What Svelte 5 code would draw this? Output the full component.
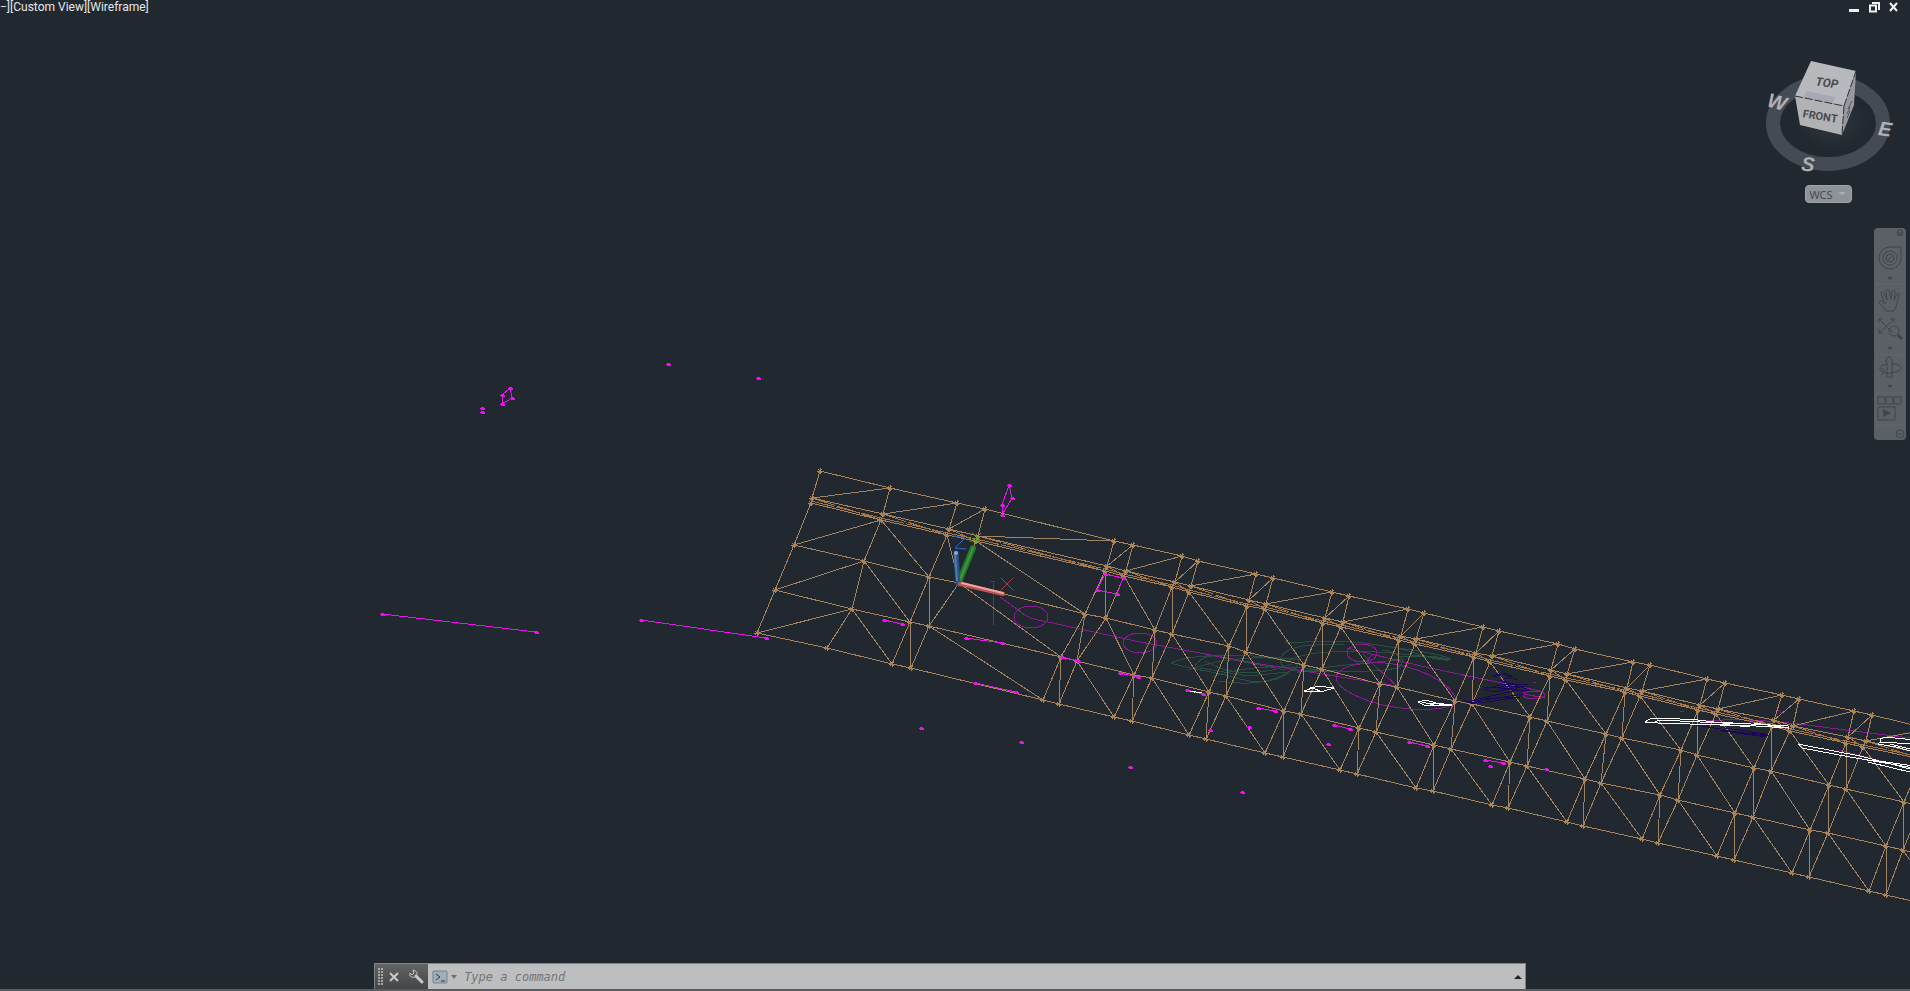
<script>
  // Each station across the strip: top, ridge, eave, third, two-thirds, bottom
  const stations = [
    [[820, 471], [812, 498], [811, 503], [794, 545], [775, 590], [757, 633]],
    [[890, 488], [883, 514], [881, 520], [864, 561], [852, 609], [827, 648]],
    [[957, 503], [949, 529], [947, 535], [929, 577], [910, 622], [892, 664]],
    [[985, 509], [978, 536], [976, 541], [959, 583], [929, 626], [911, 668]],
    [[1114, 541], [1107, 566], [1105, 571], [1085, 614], [1061, 657], [1043, 700]],
    [[1133, 545], [1126, 571], [1124, 576], [1106, 618], [1077, 661], [1059, 704]],
    [[1182, 556], [1175, 582], [1172, 587], [1155, 630], [1134, 675], [1114, 717]],
    [[1198, 561], [1191, 586], [1189, 592], [1172, 634], [1152, 678], [1132, 721]],
    [[1256, 574], [1249, 600], [1247, 606], [1229, 646], [1209, 692], [1189, 735]],
    [[1273, 578], [1266, 604], [1265, 609], [1246, 652], [1226, 696], [1206, 739]],
    [[1332, 592], [1325, 618], [1323, 623], [1304, 665], [1284, 711], [1265, 753]],
    [[1349, 596], [1343, 622], [1341, 627], [1322, 669], [1301, 714], [1283, 757]],
    [[1408, 609], [1401, 636], [1399, 640], [1380, 684], [1359, 728], [1340, 770]],
    [[1424, 613], [1416, 639], [1415, 644], [1397, 687], [1376, 732], [1357, 774]],
    [[1483, 627], [1476, 653], [1474, 657], [1455, 701], [1434, 745], [1416, 788]],
    [[1499, 631], [1492, 656], [1490, 662], [1472, 704], [1451, 749], [1433, 791]],
    [[1558, 644], [1551, 670], [1550, 676], [1530, 717], [1510, 762], [1492, 805]],
    [[1575, 649], [1567, 674], [1566, 680], [1547, 721], [1527, 766], [1508, 808]],
    [[1633, 662], [1627, 688], [1625, 692], [1606, 734], [1585, 779], [1567, 822]],
    [[1650, 665], [1642, 691], [1640, 696], [1622, 738], [1601, 783], [1583, 826]],
    [[1707, 679], [1700, 705], [1698, 710], [1681, 750], [1660, 795], [1642, 839]],
    [[1725, 683], [1718, 709], [1716, 714], [1697, 755], [1678, 800], [1658, 843]],
    [[1782, 695], [1774, 720], [1772, 726], [1754, 768], [1735, 813], [1717, 856]],
    [[1799, 699], [1793, 726], [1790, 731], [1771, 771], [1753, 817], [1734, 860]],
    [[1854, 711], [1848, 737], [1846, 743], [1829, 785], [1810, 830], [1792, 873]],
    [[1872, 715], [1866, 741], [1863, 747], [1846, 789], [1828, 833], [1809, 877]],
    [[1930, 729], [1924, 754], [1922, 759], [1904, 802], [1886, 846], [1869, 891]],
    [[1947, 733], [1940, 758], [1938, 764], [1921, 806], [1903, 850], [1886, 895]],
    [[2005, 746], [1998, 772], [1996, 777], [1978, 818], [1960, 864], [1943, 908]]
  ];

  const seg = (a, b) => `M${a[0]} ${a[1]}L${b[0]} ${b[1]}`;
  const run = (pts) => 'M' + pts.map((p) => p.join(' ')).join('L');
  const rows = [0, 1, 2, 3, 4, 5].map((r) => run(stations.map((s) => s[r]))).join('');
  const ribs = stations.map(run).join('');

  let braces = '';
  for (let i = 0; i < stations.length - 1; i++) {
    const a = stations[i];
    const b = stations[i + 1];
    braces += seg(a[1], b[0]);
    if (i === 0) {
      braces += seg(b[2], a[3]) + seg(b[3], a[4]) + seg(b[4], a[5]);
    } else {
      braces += seg(a[2], b[3]) + seg(a[3], b[4]) + seg(a[4], b[5]);
    }
  }

  let band = '';
  for (let i = 0; i < stations.length - 1; i++) {
    const a = stations[i];
    const b = stations[i + 1];
    band += seg(a[1], b[2]) + seg([a[2][0], a[2][1] - 2], [b[2][0], b[2][1] - 2]);
  }

  const star = ([x, y]) => `M${x - 3} ${y}h6M${x} ${y - 3}v6M${x - 2} ${y - 2}l4 4M${x + 2} ${y - 2}l-4 4`;
  const nodes = stations.flat().map(star).join('');

  const markers = [
    [482, 408], [482, 412], [668, 364], [758, 378], [921, 728], [1021, 742], [1130, 767],
    [1242, 792], [1210, 730], [1249, 727], [1328, 744], [1490, 766], [1546, 769]
  ];
  const spans = [
    [[382, 614], [536, 632]], [[641, 620], [766, 638]], [[884, 620], [902, 624]],
    [[966, 638], [1002, 643]], [[975, 683], [1016, 692]], [[1062, 657], [1078, 661]],
    [[1120, 673], [1138, 677]], [[1187, 690], [1203, 694]], [[1258, 708], [1275, 711]],
    [[1334, 725], [1350, 729]], [[1409, 742], [1427, 746]], [[1485, 760], [1503, 763]]
  ];
  const quads = [
    [[510, 388], [512, 398], [502, 404], [502, 395]],
    [[1009, 485], [1012, 498], [1002, 515], [1002, 505]],
    [[1105, 574], [1123, 578], [1117, 594], [1097, 590]]
  ];
  const loops = quads.map((q) => run(q) + 'Z').join('');
  const dots = [...markers, ...spans.flat(), ...quads.flat()];

  let command = $state('');
</script>

<main class="viewport">
  <svg class="model" viewBox="0 0 1910 991" preserveAspectRatio="xMinYMin slice" aria-label="Model space">
    <g class="aliased">
      <g class="green">
        <path d="M1171 663C1188 655 1230 652 1300 660M1171 663C1188 669 1218 672 1240 679C1264 686 1288 678 1294 666M1195 666C1200 658 1210 653 1224 658L1285 670M1188 670C1230 655 1280 655 1296 664M1212 677C1245 665 1290 664 1330 672M1218 681C1250 686 1274 682 1290 671M1205 661C1230 676 1260 676 1292 664M1200 668L1248 676L1288 672" />
        <path d="M1284 643C1320 641 1352 640 1384 646C1410 650 1440 653 1451 659M1281 657C1288 645 1310 644 1345 645M1285 662C1310 648 1370 648 1451 660M1290 670C1330 670 1370 674 1397 668C1410 660 1397 652 1382 650M1400 649C1420 653 1432 661 1448 660M1398 656L1430 656L1450 659M1297 673C1330 664 1370 664 1404 659M1281 657C1278 668 1290 674 1330 671M1294 650C1300 656 1300 663 1294 670" />
      </g>
      <g class="purple">
        <path d="M993 583V625M991 581h4M1000 597L1021 612Q1028 619 1048 622L1140 642L1260 664L1397 686" />
        <ellipse cx="1031" cy="617" rx="17" ry="11" />
        <ellipse cx="1140" cy="643" rx="17" ry="10" />
        <ellipse cx="1362" cy="653" rx="15" ry="9" />
        <path d="M1336 677C1338 666 1360 662 1385 663C1420 666 1452 684 1456 700C1454 709 1430 710 1410 709C1370 706 1336 690 1336 677Z" />
        <path d="M1347 648C1375 655 1395 660 1430 668L1540 691M1363 654L1375 666L1397 686M1372 655L1366 662" />
        <ellipse cx="1534" cy="695" rx="11" ry="4" />
        <path d="M1524 694L1545 698M1533 682h3M1680 711h4M1777 709l4 4M1812 733l6 3M1700 721C1740 718 1790 722 1830 728L1910 738M1838 750L1910 768" />
      </g>
      <path class="brace" d={braces} />
      <path class="band" d={band} />
      <path class="tan" d={rows + ribs} />
      <path class="tan" d={nodes} />
      <path class="navy" d="M1463 702L1490 699L1524 694M1464 700L1472 704L1485 699L1514 697M1466 703L1486 702L1520 697M1482 690L1500 685L1528 684M1484 688L1502 687L1526 686M1482 689L1494 692L1520 687M1494 677L1506 673L1510 678L1518 680M1492 676L1500 674L1512 676L1504 679M1500 680L1530 690L1512 691M1474 700L1500 694L1518 690L1500 688M1502 682L1514 684M1720 730L1768 736M1722 731L1767 735M1725 728L1766 734M1730 732L1766 737M1690 724L1720 729" />
      <path class="white" d="M1304 691L1318 686L1334 688L1324 691ZM1310 687L1320 691M1418 702L1426 700L1436 703L1452 705L1436 706L1424 705ZM1422 702L1434 705M1430 703L1448 705M1190 691L1203 694" />
      <path class="white" d="M1645 722L1650 719L1662 718L1698 720L1714 722L1788 726L1788 728L1740 725L1750 726L1690 724L1658 723ZM1652 723L1660 720L1700 722L1746 724M1720 724L1750 727M1754 723L1788 728" />
      <path class="white" d="M1798 744L1808 746L1860 756L1914 770M1798 744L1802 748L1850 757L1914 768M1868 762L1914 773M1872 760L1914 766M1880 739L1886 737L1914 740M1880 742L1878 744L1896 747L1914 752M1880 739L1880 742L1914 744M1890 744L1914 750" />
      <path class="magenta" d={spans.map(([a, b]) => seg(a, b)).join('') + loops} />
      <path class="magenta" d={dots.map(([x, y]) => `M${x - 2} ${y}h5M${x - 1} ${y - 1}h3M${x - 1} ${y + 1}h4`).join('')} />
      <path class="white" d="M1190 691L1202 693" />
    </g>
    <g class="ucs">
      <path d="M959 582L973 548" stroke="#26782c" stroke-width="6" />
      <path d="M960 580L973 548" stroke="#3b9a38" stroke-width="2" />
      <path d="M958 584L956 553" stroke="#2d5185" stroke-width="5" />
      <path d="M957 580L955 553" stroke="#4d7cae" stroke-width="2" />
      <circle cx="956" cy="553" r="2" fill="#6fb0e8" />
      <path d="M960 584L1003 594" stroke="#b95759" stroke-width="4" />
      <path d="M962 583L1003 593" stroke="#f4a39d" stroke-width="2" />
      <path d="M1001 578L1013 590M1013 578L1001 590" stroke="#b8363a" />
      <path d="M953 536L965 538L955 548L966 549" stroke="#2e68ca" />
      <path d="M972 533L977 537L981 533M977 537L976 543M970 541L980 540" stroke="#58a729" />
    </g>
  </svg>

  <header class="titlebar">
    <div class="view-label">−][Custom View][Wireframe]</div>
    <div class="window-buttons">
      <button aria-label="Minimize"><svg viewBox="0 0 12 12"><path d="M1 9.500h10" stroke-width="3" /></svg></button>
      <button aria-label="Restore"><svg viewBox="0 0 12 12"><path d="M2 4.500h6v6h-6zM4 2h7v7" stroke-width="2" /></svg></button>
      <button aria-label="Close"><svg viewBox="0 0 12 12"><path d="M2 2L9 10M9 2L2 10" stroke-width="2" /></svg></button>
    </div>
  </header>

  <div class="compass">
    <svg viewBox="0 0 140 130" width="140" height="130" aria-label="View cube">
      <defs>
        <radialGradient id="shade"><stop offset="0.3" stop-color="#2c333b" /><stop offset="1" stop-color="#22282f" /></radialGradient>
      </defs>
      <ellipse cx="68" cy="63" rx="55" ry="41" fill="none" stroke="#454b53" stroke-width="14" />
      <ellipse cx="72" cy="62" rx="36" ry="28" fill="url(#shade)" />
      <path d="M51 1L96 11L84 46L35 36Z" fill="#b7b9bc" />
      <path d="M35 36L84 46L82 75L40 65Z" fill="#b0b2b4" />
      <path d="M96 11L84 46L82 75L94 45Z" fill="#96999d" />
      <path d="M46 31L75 37L73 44L44 38Z" fill="#a6a9b1" />
      <path d="M35 36L84 46L96 11M84 46L82 75" fill="none" stroke="#30353a" stroke-dasharray="8 2" />
      <path d="M87 54l3 -7M87 58l3 -7M88 49l4 -8" stroke="#53575c" fill="none" />
      <text class="face" x="67" y="27" transform="rotate(7 67 22)" font-size="12" font-style="italic">TOP</text>
      <text class="face" x="60" y="60" transform="rotate(9 60 57)" font-size="11">FRONT</text>
      <text class="point" x="17" y="49" transform="rotate(15 17 43)">W</text>
      <text class="point" x="125" y="76" transform="rotate(8 125 70)">E</text>
      <text class="point" x="48" y="111" transform="rotate(5 48 105)">S</text>
    </svg>
    <button class="wcs">WCS <svg viewBox="0 0 8 6" width="8" height="6"><path d="M0 1h8L4 4z" fill="#abaeb4" /></svg></button>
  </div>

  <nav class="navbar" aria-label="Navigation bar">
    <svg viewBox="0 0 32 212" width="32" height="212">
      <g fill="none" stroke="#3f454b">
        <circle cx="26" cy="5" r="3" /><path d="M24 4l4 3M28 4l-4 3" />
        <path d="M16 19H27V31A11 11 0 1 1 16 19Z" /><circle cx="16" cy="30" r="7" /><circle cx="16" cy="30" r="4" /><path d="M14 32l4 -4" />
        <path d="M12 83C10 80 8 77 5 75C5 72 8 72 11 76L7 66C7 63 9 63 10 65L13 72L12 63C13 61 15 61 15 63L17 71L18 63C19 61 21 62 21 64L20 72L23 66C24 64 26 65 25 67L22 79L20 83Z" />
        <path d="M5 91L19 105M20 91L5 105M5 95V91H9M16 91H20V95M5 101V105H9" /><circle cx="20" cy="103" r="5" /><path d="M24 107L28 111" stroke-width="3" />
        <path d="M13 149V133H11L15 128L19 133H18V149ZM13 136C7 137 4 140 7 143C11 147 24 145 27 141C28 138 24 136 18 136M7 140l4 3l-4 4" />
        <path d="M4 169h7v7h-7zM12 169h7v7h-7zM20 169h7v7h-7zM4 179h17v13h-17z" />
        <circle cx="26" cy="206" r="4" /><path d="M24 206h4" />
      </g>
      <path d="M13 49h6l-3 3zM13 119h6l-3 3zM13 157h6l-3 3zM9 181l8 4l-8 4z" fill="#3f454b" />
      <path d="M2 56h28M2 127h28M2 165h28M2 197h28" stroke="#636970" />
    </svg>
  </nav>

  <form class="command" onsubmit={(e) => e.preventDefault()}>
    <div class="tools">
      <span class="grip"></span>
      <button type="button" aria-label="Close command line"><svg viewBox="0 0 14 14" width="14" height="14"><path d="M3 3L11 11M11 3L3 11" stroke="#c8c9ca" stroke-width="2" /></svg></button>
      <button type="button" aria-label="Customize"><svg viewBox="0 0 16 16" width="16" height="16"><path d="M7 7L13 13" stroke="#c8c9ca" stroke-width="3" stroke-linecap="round" /><path d="M4 1L5 4L3 6L1 4C0 7 2 9 6 8C9 6 9 2 4 1Z" fill="none" stroke="#c8c9ca" stroke-width="1" /></svg></button>
    </div>
    <button class="prompt" type="button" aria-label="Recent commands">
      <svg viewBox="0 0 26 16" width="26" height="16">
        <rect x="1" y="2" width="14" height="12" rx="1" fill="#a2adb7" stroke="#728392" />
        <path d="M4 5l4 3l-4 3M9 12h4" fill="none" stroke="#303b45" stroke-width="1" />
        <path d="M19 6h6l-3 4z" fill="#6f7274" />
      </svg>
    </button>
    <input aria-label="Command" placeholder="Type a command" bind:value={command} />
    <button class="history" type="button" aria-label="Command history"><svg viewBox="0 0 8 6" width="8" height="6"><path d="M0 5h8L4 1z" fill="#202327" /></svg></button>
  </form>
</main>

<style>
  :global(body) {
    margin: 0;
    background: #22282f;
  }
  .viewport {
    position: relative;
    display: flex;
    flex-direction: column;
    align-items: flex-end;
    box-sizing: border-box;
    min-height: 100vh;
    overflow: hidden;
    border-bottom: 2px solid #5b5c5e;
    background: #22282f;
    font-family: "Open Sans", "Noto Sans", sans-serif;
  }
  .model {
    position: absolute;
    inset: 0;
    width: 100%;
    height: 100vh;
  }
  .aliased path,
  .aliased ellipse {
    fill: none;
    stroke-width: 1px;
    shape-rendering: crispEdges;
  }
  .green { stroke: #2a4d43; }
  .purple { stroke: #8a1a94; }
  .aliased .tan { stroke: #a98459; }
  .aliased .brace { stroke: #a18463; }
  .aliased .band { stroke: #a37445; stroke-dasharray: 24 2; }
  .aliased .navy { stroke: #1b0659; }
  .aliased .white { stroke: #fff; }
  .aliased .magenta { stroke: #e815e8; }
  .ucs { fill: none; stroke-linecap: round; }
  button {
    display: flex;
    align-items: center;
    padding: 0;
    border: 0;
    background: none;
    font: inherit;
  }
  .titlebar {
    position: relative;
    display: flex;
    align-items: flex-start;
    justify-content: space-between;
    width: 100%;
    height: 16px;
  }
  .view-label {
    color: #e4e6e8;
    font-family: Roboto, sans-serif;
    font-size: 12px;
    line-height: 14px;
    white-space: nowrap;
  }
  .window-buttons {
    display: flex;
    gap: 8px;
    padding: 1px 10px 0 0;
  }
  .window-buttons svg {
    width: 12px;
    height: 12px;
    fill: none;
    stroke: #f1f2f3;
  }
  .compass {
    position: relative;
    display: flex;
    flex-direction: column;
    align-items: center;
    margin: 44px 10px 0 0;
  }
  .face {
    fill: #484b4f;
    font-family: Roboto, sans-serif;
    font-weight: 700;
    text-anchor: middle;
  }
  .point {
    fill: #afb1b4;
    font-family: "Liberation Sans", sans-serif;
    font-size: 20px;
    font-style: italic;
    font-weight: 700;
    text-anchor: middle;
  }
  .wcs {
    gap: 5px;
    height: 18px;
    margin: -5px 3px 0 0;
    padding: 0 5px 0 3px;
    border: 1px solid #a0a3a9;
    border-radius: 4px;
    background: #8e9299;
    color: #44484d;
    font-size: 11px;
  }
  .navbar {
    position: relative;
    display: flex;
    margin: 25px 4px 0 0;
    border-radius: 4px;
    background: #5a6066;
  }
  .command {
    position: relative;
    display: flex;
    align-self: center;
    box-sizing: border-box;
    width: 60.3%;
    height: 26px;
    margin: auto 10px 0 0;
    border: 1px solid #808385;
    border-bottom: 0;
    background: #bcbebf;
  }
  .tools {
    display: flex;
    align-items: center;
    gap: 3px;
    padding: 0 3px;
    background: linear-gradient(#616365, #434547);
  }
  .tools button + button { padding-left: 5px; }
  .grip {
    width: 6px;
    height: 18px;
    background-image: radial-gradient(circle at 1px 1px, #a5a6a7 1px, transparent 1px);
    background-size: 3px 3px;
  }
  .prompt { padding: 0 6px 0 4px; }
  input {
    flex: 1;
    min-width: 0;
    padding: 0;
    border: 0;
    outline: 0;
    background: transparent;
    color: #35383a;
    font: italic 12px "DejaVu Sans Mono", monospace;
  }
  input::placeholder { color: #737678; opacity: 1; }
  .history { padding: 0 3px; }
</style>
